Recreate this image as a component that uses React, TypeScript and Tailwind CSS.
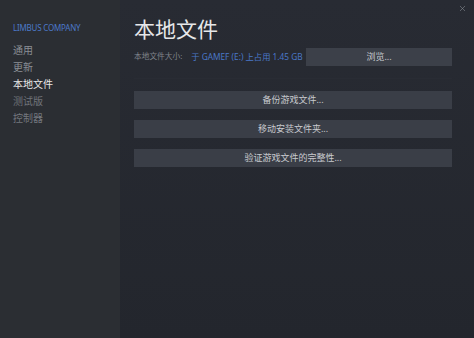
import { X } from "lucide-react";

const NAV = [
  { label: "通用", tone: "text-[#8a8e95]" },
  { label: "更新", tone: "text-[#8a8e95]" },
  { label: "本地文件", tone: "text-[#e8e8e8]" },
  { label: "测试版", tone: "text-[#6f737a]" },
  { label: "控制器", tone: "text-[#73777e]" },
];

const ACTIONS = ["备份游戏文件...", "移动安装文件夹...", "验证游戏文件的完整性..."];

export default function App() {
  return (
    <div
      className="flex h-[338px] w-[474px] overflow-hidden bg-[#24272f]"
      style={{ fontFamily: '"Noto Sans", "Noto Sans CJK SC", sans-serif' }}
    >
      {/* Sidebar */}
      <div className="flex w-[120px] shrink-0 flex-col bg-[#2b2e33] pl-[13px] pt-[23px]">
        <span className="whitespace-nowrap text-[8px] leading-[10px] tracking-tight text-[#4b79c9]">LIMBUS COMPANY</span>
        <div className="mt-[9px] flex flex-col">
          {NAV.map(n => (
            <span key={n.label} className={`text-[10px] leading-[17px] ${n.tone}`}>
              {n.label}
            </span>
          ))}
        </div>
      </div>

      {/* Main */}
      <div className="relative min-w-0 flex-1 bg-gradient-to-b from-[#282b33] to-[#23262d] pl-[14px] pr-[22px] pt-[16px]">
        <button className="absolute right-[5px] top-[2px] p-0.5 text-[#8a8e95]">
          <X size={9} strokeWidth={1.5} />
        </button>

        <h1 className="text-[21px] leading-[26px] text-[#e6e7e9]">本地文件</h1>

        <div className="mt-[6px] flex h-[18px] items-center whitespace-nowrap">
          <span className="text-[7.7px] text-[#80848b]">本地文件大小:</span>
          <span className="ml-[9px] text-[8.3px] text-[#4a78c8]">于 GAMEF (E:) 上占用 1.45 GB</span>
          <button className="ml-auto flex h-[18px] w-[146px] shrink-0 items-center justify-center bg-[#3c4049] text-[9px] text-[#c9cbcf]">
            浏览...
          </button>
        </div>

        <div className="mt-[12px] h-px bg-[#292c34]" />

        <div className="mt-[12px] flex flex-col gap-[11px]">
          {ACTIONS.map(a => (
            <button
              key={a}
              className="flex h-[18px] w-full items-center justify-center bg-[#3a3e47] text-[9px] text-[#c9cbcf]"
            >
              {a}
            </button>
          ))}
        </div>
      </div>
    </div>
  );
}
